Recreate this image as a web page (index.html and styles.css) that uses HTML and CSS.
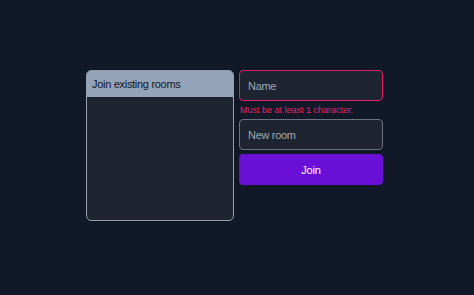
FILE: index.html
```html
<!DOCTYPE html>
<html>
<head>
<meta charset="utf-8">
<link rel="stylesheet" href="styles.css">
</head>
<body>
<div class="wrap">
  <div class="rooms">
    <div class="rooms-head">Join existing rooms</div>
  </div>
  <form class="form">
    <input class="field field-error" type="text" placeholder="Name">
    <div class="error">Must be at least 1 character.</div>
    <input class="field" type="text" placeholder="New room">
    <button class="join" type="button">Join</button>
  </form>
</div>
</body>
</html>
```
FILE: styles.css
```css
html, body {
  margin: 0;
  background: #111827;
  height: 100%;
}
body {
  font-family: "Liberation Sans", Arial, sans-serif;
  padding: 70px 0 0 86px;
  box-sizing: border-box;
}
.wrap {
  display: flex;
  gap: 5px;
  align-items: flex-start;
}
.rooms {
  width: 148px;
  height: 151px;
  box-sizing: border-box;
  border: 1px solid #959eae;
  border-radius: 5px;
  background: #1f2530;
  overflow: hidden;
}
.rooms-head {
  height: 26px;
  background: #94a3b8;
  color: #111827;
  font-size: 11px;
  letter-spacing: -0.3px;
  line-height: 27px;
  padding-left: 5px;
}
.form {
  width: 144px;
  display: flex;
  flex-direction: column;
  margin: 0;
}
.field {
  box-sizing: border-box;
  width: 100%;
  height: 31px;
  border: 1px solid #6b7280;
  border-radius: 4px;
  background: #1f2530;
  color: #e5e7eb;
  font-family: inherit;
  font-size: 11px;
  letter-spacing: -0.3px;
  padding: 0 8px;
  outline: none;
}
.field::placeholder {
  color: #a1a8b4;
}
.field-error {
  border-color: #e11d63;
}
.error {
  color: #e0246a;
  font-size: 9px;
  line-height: 12px;
  margin: 3px 0 3px 1px;
}
.join {
  margin-top: 4px;
  height: 31px;
  border: none;
  border-radius: 4px;
  background: #6a0fd6;
  color: #ffffff;
  font-family: inherit;
  font-size: 11px;
  letter-spacing: -0.2px;
}
```
